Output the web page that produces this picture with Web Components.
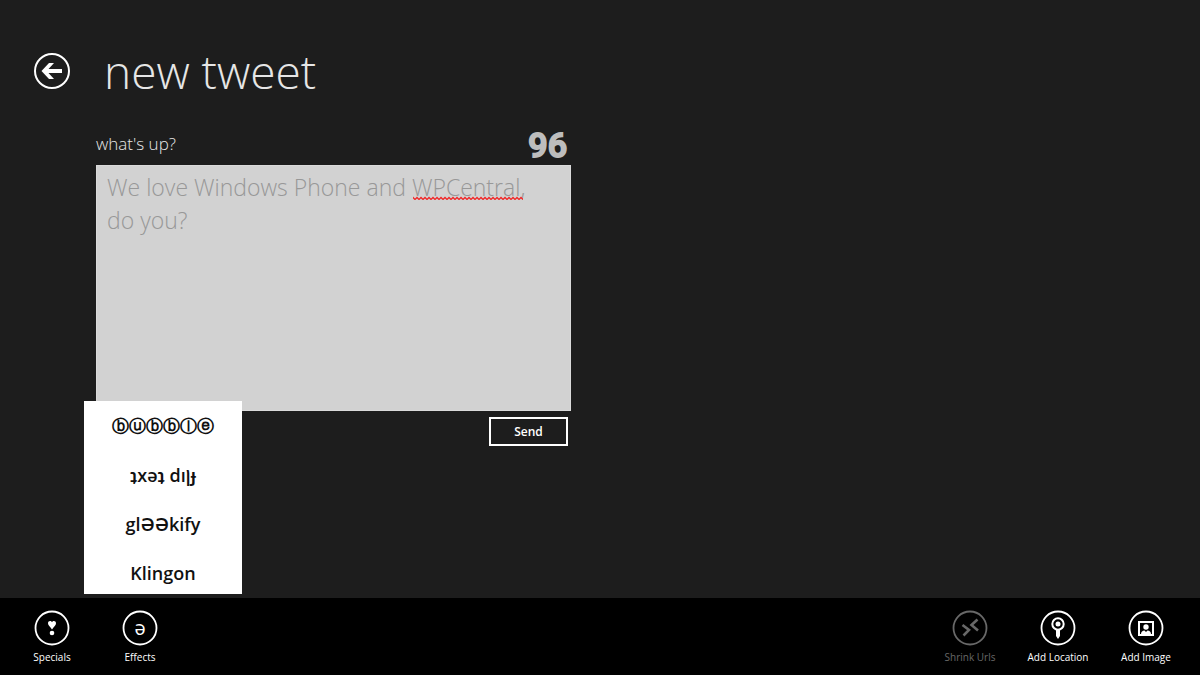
<!DOCTYPE html>
<html lang="en">
<head>
<meta charset="utf-8">
<title>new tweet</title>
<style>
  body { margin: 0; background: #1d1d1d; color: #fff; font-family: "Open Sans", "Noto Sans", sans-serif; }
</style>
</head>
<body>
<tweet-app></tweet-app>
<script>
const define = (name, html, ready) => customElements.define(name, class extends HTMLElement {
  constructor() {
    super();
    this.attachShadow({ mode: "open" }).innerHTML = html;
  }
  connectedCallback() { if (ready) ready(this, this.shadowRoot); }
});

define("page-header", `
<style>
  :host { display: flex; align-items: center; gap: 34px; padding: 38px 34px 0; }
  button { display: block; width: 36px; height: 36px; padding: 0; border: 0; background: none; color: #fff; }
  svg { display: block; }
  h1 { margin: 0; font-size: 46px; line-height: 66px; font-weight: 300; color: #e6e6e6; }
</style>
<button type="button" aria-label="Back">
  <svg width="36" height="36" viewBox="0 0 36 36"><circle cx="18" cy="18" r="17" fill="none" stroke="currentColor" stroke-width="2"/><path d="M7.500 18 15 10h5l-5.500 6H28v4H14.500l5.500 6h-5z" fill="currentColor"/></svg>
</button>
<h1><slot></slot></h1>`);

define("tweet-composer", `
<style>
  :host { display: block; width: 475px; max-width: 100%; }
  .top { display: flex; justify-content: space-between; align-items: center; height: 40px; }
  label { padding-bottom: 2px; font-size: 17px; line-height: 24px; font-weight: 300; color: #e6e6e6; }
  output { padding: 0 4px 0 0; font: 500 34px/40px Roboto, sans-serif; color: #bdbdbd; -webkit-text-stroke: 2px #bdbdbd; stroke-linejoin: round; }
  .field { position: relative; }
  textarea { display: block; box-sizing: border-box; width: 100%; height: 246px; margin: 0; padding: 5px 20px 5px 10px; border: 1px solid #dadada; border-radius: 0; background: #d2d2d2; color: #989898; font: 300 23px/33px "Open Sans", sans-serif; resize: none; outline: 0; overflow: hidden; }
  .squiggle { position: absolute; left: 317px; top: 31px; }
  .actions { display: flex; justify-content: flex-end; padding: 6px 3px 0 0; }
  button { box-sizing: border-box; width: 79px; height: 29px; padding: 0; border: 2px solid #fff; background: transparent; color: #fff; font: 600 12px/20px "Open Sans", sans-serif; }
</style>
<div class="top"><label for="tweet">what's up?</label><output for="tweet">96</output></div>
<div class="field">
  <textarea id="tweet" spellcheck="false">We love Windows Phone and WPCentral, do you?</textarea>
  <svg class="squiggle" width="110" height="4" aria-hidden="true"><defs><pattern id="w" width="4" height="4" patternUnits="userSpaceOnUse"><path d="M-1 0 2 3 5 0" transform="translate(0 .500)" fill="none" stroke="#f02828" stroke-width="1.300"/></pattern></defs><rect width="110" height="4" fill="url(#w)"/></svg>
</div>
<div class="actions"><button type="button">Send</button></div>`);

define("effects-menu", `
<style>
  :host { display: flex; flex-direction: column; gap: 19px; box-sizing: border-box; width: 158px; padding: 10px 0 6px; background: #fff; }
  ::slotted(button) { height: 30px; padding: 0; border: 0; background: none; color: #111; text-align: center; font: 600 18px/30px "Open Sans", "Noto Sans", "DejaVu Sans", sans-serif; }
  ::slotted(button.bubble) { font: 700 17px/30px "DejaVu Sans", sans-serif; }
</style>
<slot></slot>`);

const icons = {
  heart: `<path d="M18 19.500C16 16.500 14 15.500 14 13.300 14 10.500 17.200 10.300 18 12.300 18.800 10.300 22 10.500 22 13.300 22 15.500 20 16.500 18 19.500z" fill="currentColor"/><circle cx="18" cy="23" r="2.300" fill="currentColor"/>`,
  schwa: ``,
  shrink: `<path d="M10.500 15 17 20 11.500 25.500M25.500 9.500 19.500 15 26 20.500" fill="none" stroke="currentColor" stroke-width="2.600"/>`,
  pin: `<circle cx="18" cy="14" r="5.700" fill="none" stroke="currentColor" stroke-width="2"/><circle cx="18" cy="14" r="2.500" fill="currentColor"/><path d="M16 19.500h4V26l-2 3-2-3z" fill="currentColor"/>`,
  image: `<path d="M11 12h14v13H11z" fill="none" stroke="currentColor" stroke-width="2"/><circle cx="18" cy="17" r="2.700" fill="currentColor"/><path d="M13 24c0-2 1.500-3.500 3.500-3.500L18 22l1.500-1.500c2 0 3.500 1.500 3.500 3.500z" fill="currentColor"/>`
};

define("bar-command", `
<style>
  :host { display: block; width: 88px; }
  button { display: flex; flex-direction: column; align-items: center; gap: 3px; width: 100%; padding: 0; border: 0; background: none; color: #fff; font: 400 10px/16px "Open Sans", sans-serif; white-space: nowrap; }
  button:disabled { color: #686868; }
  .icon { display: grid; place-items: center; height: 36px; }
  .icon > * { grid-area: 1 / 1; }
  .glyph { font-size: 20px; line-height: 24px; }
</style>
<button type="button"><span class="icon"></span><span><slot></slot></span></button>`, (host, root) => {
  const icon = host.getAttribute("icon");
  root.querySelector("button").disabled = host.hasAttribute("disabled");
  root.querySelector(".icon").innerHTML =
    `<svg width="36" height="36" viewBox="0 0 36 36"><circle cx="18" cy="18" r="16.500" fill="none" stroke="currentColor" stroke-width="1.800"/>${icons[icon]}</svg>` +
    (icon === "schwa" ? `<span class="glyph">ə</span>` : "");
});

define("app-bar", `
<style>
  :host { display: block; position: relative; background: #000; }
  nav { display: flex; justify-content: space-between; padding: 12px 10px 10px 8px; }
  .group { display: flex; }
  ::slotted(effects-menu) { position: absolute; left: 84px; bottom: calc(100% + 4px); }
</style>
<slot name="menu"></slot>
<nav><div class="group"><slot name="left"></slot></div><div class="group"><slot name="right"></slot></div></nav>`);

define("tweet-app", `
<style>
  :host { display: flex; flex-direction: column; min-height: 100vh; }
  main { flex: 1; padding: 21px 34px 0 96px; }
</style>
<page-header>new tweet</page-header>
<main><tweet-composer></tweet-composer></main>
<app-bar>
  <effects-menu slot="menu">
    <button type="button" class="bubble">ⓑⓤⓑⓑⓛⓔ</button>
    <button type="button">ʇxəʇ dıןɟ</button>
    <button type="button">glƏƏkify</button>
    <button type="button">Klingon</button>
  </effects-menu>
  <bar-command slot="left" icon="heart">Specials</bar-command>
  <bar-command slot="left" icon="schwa">Effects</bar-command>
  <bar-command slot="right" icon="shrink" disabled>Shrink Urls</bar-command>
  <bar-command slot="right" icon="pin">Add Location</bar-command>
  <bar-command slot="right" icon="image">Add Image</bar-command>
</app-bar>`);
</script>
</body>
</html>
